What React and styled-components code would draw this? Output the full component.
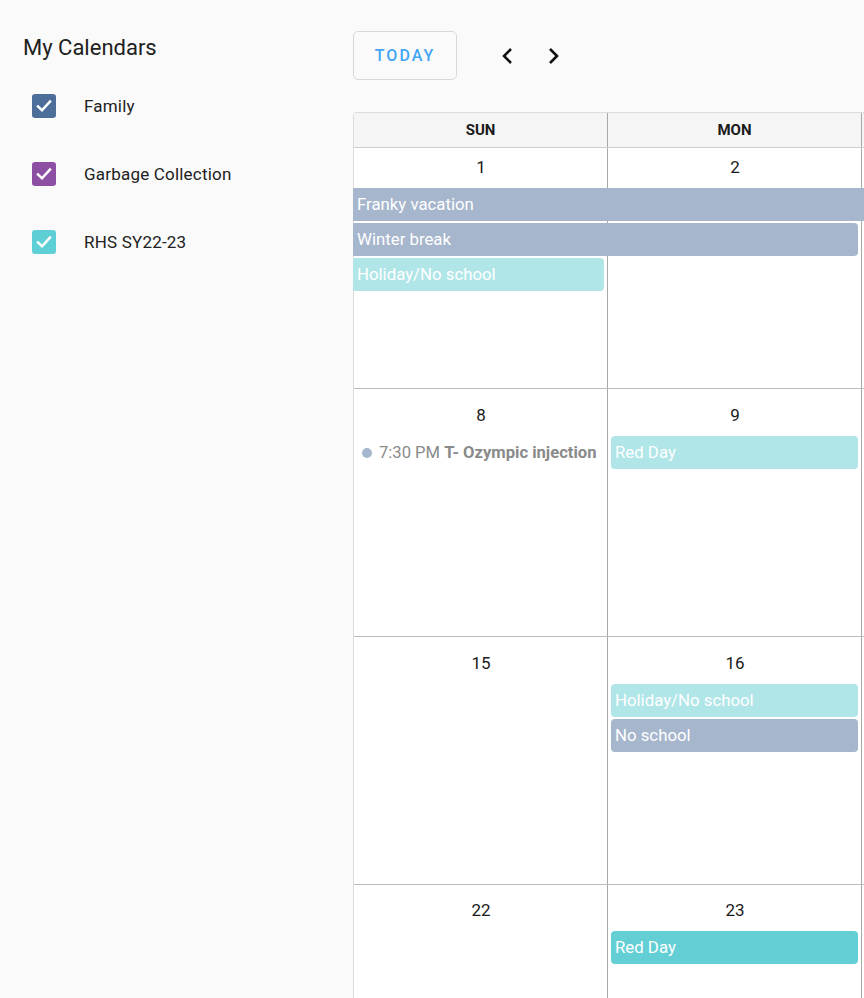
import React from "react";
import styled, { createGlobalStyle } from "styled-components";

const Global = createGlobalStyle`
  html, body { margin: 0; padding: 0; background: #fafafa; overflow: hidden; }
  body { font-family: Roboto, "Liberation Sans", Arial, sans-serif; color: #212121; }
`;

const Page = styled.div`
  display: flex;
  align-items: flex-start;
  width: 100vw;
  height: 998px;
  overflow: hidden;
`;

const Sidebar = styled.aside`
  flex: 0 0 353px;
  box-sizing: border-box;
  padding: 34px 0 0 23px;
`;

const SideTitle = styled.h2`
  margin: 0 0 32px;
  font-size: 22px;
  font-weight: 400;
  line-height: 28px;
  color: #212121;
`;

const CalList = styled.ul`
  list-style: none;
  margin: 0;
  padding: 0 0 0 9px;
  display: flex;
  flex-direction: column;
  gap: 44px;
`;

const CalItem = styled.li`
  display: flex;
  align-items: center;
  gap: 28px;
  height: 24px;
  font-size: 17px;
  letter-spacing: 0.2px;
  color: #212121;
`;

const Check = styled.span`
  width: 24px;
  height: 24px;
  border-radius: 3px;
  background: ${p => p.$color};
  display: flex;
  align-items: center;
  justify-content: center;
`;

const Main = styled.main`
  flex: 0 0 auto;
  display: flex;
  flex-direction: column;
  padding-top: 31px;
`;

const Toolbar = styled.div`
  display: flex;
  align-items: center;
  height: 49px;
  margin-bottom: 32px;
`;

const TodayButton = styled.button`
  width: 104px;
  height: 49px;
  box-sizing: border-box;
  border: 1px solid #d8d8d8;
  border-radius: 5px;
  background: #fafafa;
  color: #42a5f5;
  font-family: Roboto, "Liberation Sans", Arial, sans-serif;
  font-size: 16px;
  font-weight: 500;
  letter-spacing: 2px;
  padding: 0;
  margin-right: 34px;
`;

const NavButton = styled.button`
  width: 34px;
  height: 34px;
  border: none;
  background: transparent;
  padding: 0;
  display: flex;
  align-items: center;
  justify-content: center;
  margin-right: 11px;
`;

const Calendar = styled.div`
  border-top: 1px solid #dcdcdc;
  border-left: 1px solid #dcdcdc;
  border-top-left-radius: 4px;
  width: 1778px;
  background: #fff;
`;

const HeaderRow = styled.div`
  display: grid;
  grid-template-columns: repeat(7, 254px);
  height: 34px;
  background: #f5f5f5;
  border-bottom: 1px solid #cfcfcf;
`;

const HeaderCell = styled.div`
  border-right: 1px solid #a8a8a8;
  display: flex;
  align-items: center;
  justify-content: center;
  font-size: 15px;
  font-weight: 700;
  color: #1a1a1a;
`;

const Week = styled.div`
  display: grid;
  grid-template-columns: repeat(7, 254px);
  grid-template-rows: ${p => p.$top}px repeat(3, 35px) 1fr;
  height: ${p => p.$h}px;
  border-top: ${p => (p.$first ? "none" : "1px solid #bdbdbd")};
  box-sizing: border-box;
`;

const DayCell = styled.div`
  grid-row: 1 / -1;
  grid-column: ${p => p.$col};
  border-right: 1px solid #a8a8a8;
  background: #fff;
`;

const DayNum = styled.div`
  grid-row: 1;
  grid-column: ${p => p.$col};
  text-align: center;
  font-size: 17px;
  line-height: 20px;
  padding-top: ${p => p.$pad}px;
  color: #1a1a1a;
  z-index: 1;
`;

const EventBar = styled.div`
  grid-row: ${p => p.$row};
  grid-column: ${p => p.$col} / span ${p => p.$span};
  height: 33px;
  align-self: start;
  z-index: 1;
  box-sizing: border-box;
  margin-left: ${p => (p.$contL ? "-1px" : "3px")};
  margin-right: ${p => (p.$contR ? "0" : "4px")};
  border-radius: ${p => (p.$contL ? "0" : "4px")} ${p => (p.$contR ? "0 0" : "4px 4px")} ${p => (p.$contL ? "0" : "4px")};
  background: ${p => p.$bg};
  color: #fff;
  font-size: 16.8px;
  line-height: 33px;
  padding-left: 4px;
  white-space: nowrap;
  overflow: hidden;
`;

const TimedEvent = styled.div`
  grid-row: ${p => p.$row};
  grid-column: ${p => p.$col};
  height: 33px;
  align-self: start;
  z-index: 1;
  display: flex;
  align-items: center;
  gap: 7px;
  padding-left: 8px;
  font-size: 16.6px;
  color: #8a8a8a;
  white-space: nowrap;
  overflow: hidden;
`;

const Dot = styled.span`
  width: 10px;
  height: 10px;
  border-radius: 50%;
  background: ${p => p.$color};
  flex: 0 0 auto;
`;

const Bold = styled.b`
  font-weight: 700;
`;

const CheckIcon = () => (
  <svg width="18" height="18" viewBox="0 0 18 18">
    <polyline points="3,9.5 7,13.3 15,4.6" fill="none" stroke="#fff" strokeWidth="2.5" strokeLinecap="square" />
  </svg>
);

const Chevron = ({ dir }) => (
  <svg width="14" height="18" viewBox="0 0 14 18">
    <polyline
      points={dir === "left" ? "10,2 3,9 10,16" : "4,2 11,9 4,16"}
      fill="none"
      stroke="#111"
      strokeWidth="2.6"
    />
  </svg>
);

const BLUE = "#a6b6cc";
const LIGHT = "#b0e6e8";
const TEAL = "#63cfd4";

const calendars = [
  { name: "Family", color: "#4d6e99" },
  { name: "Garbage Collection", color: "#8d4fa3" },
  { name: "RHS SY22-23", color: "#5ecfd5" },
];

const days = ["SUN", "MON", "TUE", "WED", "THU", "FRI", "SAT"];

const weeks = [
  {
    start: 1, top: 40, h: 240, first: true, pad: 9,
    events: [
      { title: "Franky vacation", row: 2, col: 1, span: 7, bg: BLUE, contL: true, contR: true },
      { title: "Winter break", row: 3, col: 1, span: 2, bg: BLUE, contL: true },
      { title: "Holiday/No school", row: 4, col: 1, span: 1, bg: LIGHT, contL: true },
    ],
  },
  {
    start: 8, top: 47, h: 248, pad: 16,
    timed: [{ time: "7:30 PM", title: "T- Ozympic injection", row: 2, col: 1 }],
    events: [{ title: "Red Day", row: 2, col: 2, span: 1, bg: LIGHT }],
  },
  {
    start: 15, top: 47, h: 248, pad: 16,
    events: [
      { title: "Holiday/No school", row: 2, col: 2, span: 1, bg: LIGHT },
      { title: "No school", row: 3, col: 2, span: 1, bg: BLUE },
    ],
  },
  {
    start: 22, top: 46, h: 248, pad: 15,
    events: [{ title: "Red Day", row: 2, col: 2, span: 1, bg: TEAL }],
  },
];

export default function App() {
  return (
    <>
      <Global />
      <Page>
        <Sidebar>
          <SideTitle>My Calendars</SideTitle>
          <CalList>
            {calendars.map(c => (
              <CalItem key={c.name}>
                <Check $color={c.color}><CheckIcon /></Check>
                {c.name}
              </CalItem>
            ))}
          </CalList>
        </Sidebar>
        <Main>
          <Toolbar>
            <TodayButton>TODAY</TodayButton>
            <NavButton aria-label="Previous"><Chevron dir="left" /></NavButton>
            <NavButton aria-label="Next"><Chevron dir="right" /></NavButton>
          </Toolbar>
          <Calendar>
            <HeaderRow>
              {days.map(d => <HeaderCell key={d}>{d}</HeaderCell>)}
            </HeaderRow>
            {weeks.map(w => (
              <Week key={w.start} $top={w.top} $h={w.h} $first={w.first}>
                {days.map((d, i) => <DayCell key={d} $col={i + 1} />)}
                {days.map((d, i) => (
                  <DayNum key={d} $col={i + 1} $pad={w.pad}>{w.start + i}</DayNum>
                ))}
                {(w.timed || []).map(t => (
                  <TimedEvent key={t.title} $row={t.row} $col={t.col}>
                    <Dot $color={BLUE} />
                    <span>{t.time} <Bold>{t.title}</Bold></span>
                  </TimedEvent>
                ))}
                {w.events.map(e => (
                  <EventBar
                    key={e.title}
                    $row={e.row}
                    $col={e.col}
                    $span={e.span}
                    $bg={e.bg}
                    $contL={e.contL}
                    $contR={e.contR}
                  >
                    {e.title}
                  </EventBar>
                ))}
              </Week>
            ))}
          </Calendar>
        </Main>
      </Page>
    </>
  );
}
